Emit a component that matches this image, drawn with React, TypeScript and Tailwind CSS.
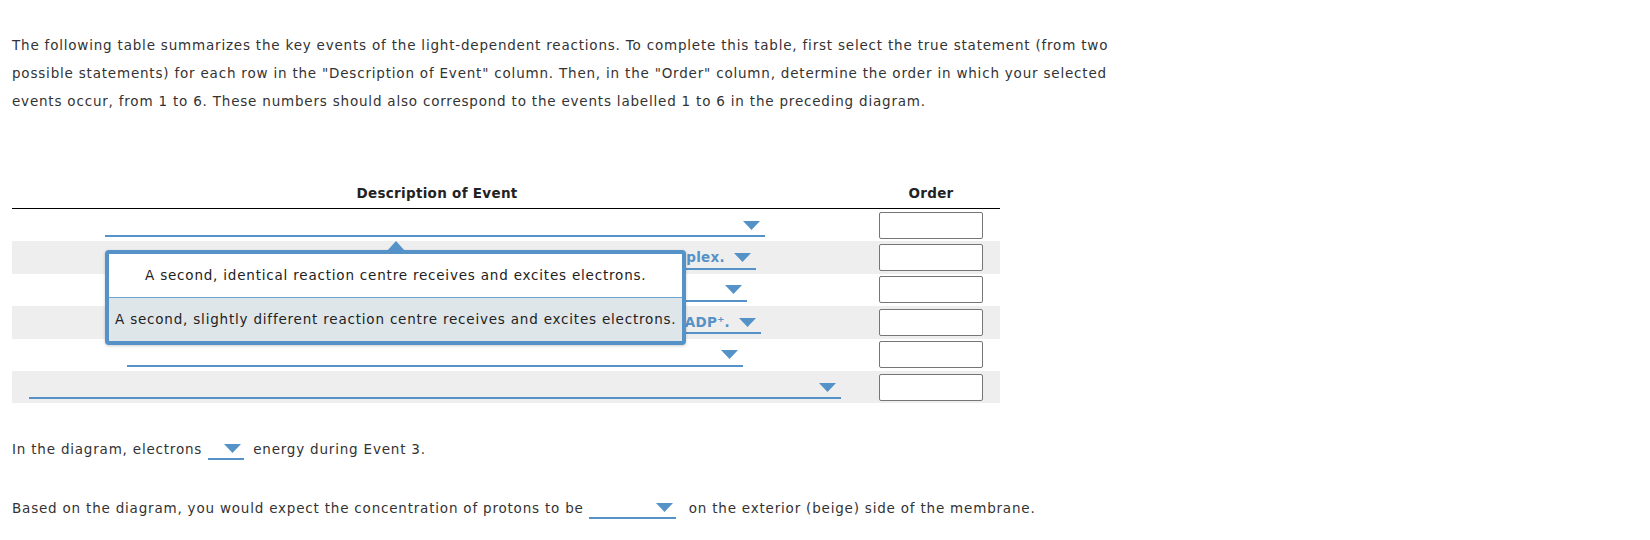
import React from 'react';

const rows: { w: number; text?: string }[] = [
  { w: 660 },
  { w: 642, text: 'Electrons pass to the cytochrome complex.' },
  { w: 624 },
  { w: 652, text: 'Electrons are used to reduce NADP⁺.' },
  { w: 616 },
  { w: 812 },
];

function Arrow() {
  return (
    <svg width="17" height="9" viewBox="0 0 17 9" className="shrink-0">
      <polygon points="0,0 17,0 8.5,9" fill="#5592c7" />
    </svg>
  );
}

function Dropdown({ w, text }: { w: number; text?: string }) {
  return (
    <div
      className="h-[24px] border-b-2 border-[#5592c7] flex items-center justify-end gap-[9px] pr-[5px] pt-[2px] overflow-hidden"
      style={{ width: w }}
    >
      {text && <span className="whitespace-nowrap font-bold text-[#5592c7] tracking-[0.3px]">{text}</span>}
      <Arrow />
    </div>
  );
}

function InlineDropdown({ w }: { w: number }) {
  return (
    <div className="h-[22px] border-b-2 border-[#5592c7] flex items-center justify-end pr-[3px]" style={{ width: w }}>
      <Arrow />
    </div>
  );
}

export default function App() {
  return (
    <div className="w-[1650px] h-[540px] bg-white px-[12px] pt-[31px] text-[13.5px] tracking-[0.8px] text-[#333] font-['DejaVu_Sans',Verdana,sans-serif] overflow-hidden">
      <p className="leading-[28px] whitespace-nowrap">
        The following table summarizes the key events of the light-dependent reactions. To complete this table, first select the true statement (from two
        <br />
        possible statements) for each row in the "Description of Event" column. Then, in the "Order" column, determine the order in which your selected
        <br />
        events occur, from 1 to 6. These numbers should also correspond to the events labelled 1 to 6 in the preceding diagram.
      </p>

      {/* table */}
      <div className="relative mt-[63px] w-[988px]">
        <div className="flex h-[31px] items-center border-b border-black font-bold text-[#222] tracking-[0.3px]">
          <div className="w-[850px] text-center">Description of Event</div>
          <div className="w-[138px] text-center">Order</div>
        </div>
        {rows.map((r, i) => (
          <div key={i} className={`flex h-[32.4px] items-center ${i % 2 === 1 ? 'bg-[#eeeeee]' : 'bg-white'}`}>
            <div className="w-[850px] flex justify-center pr-[4px]">
              <Dropdown w={r.w} text={r.text} />
            </div>
            <div className="w-[138px] flex justify-center">
              <div className="w-[104px] h-[27px] border border-[#767676] rounded-[2px] bg-white" />
            </div>
          </div>
        ))}

        {/* open menu */}
        <div className="absolute left-[93px] top-[72px] w-max whitespace-nowrap">
          <svg width="18" height="10" viewBox="0 0 18 10" className="absolute -top-[9px] left-1/2 -translate-x-1/2">
            <polygon points="0,10 9,0 18,10" fill="#5592c7" />
          </svg>
          <div className="border-4 border-[#5592c7] rounded-[4px] bg-white text-[#222] shadow-[0_1px_3px_rgba(0,0,0,0.2)]">
            <div className="h-[44px] flex items-center justify-center px-[6px] border-b border-[#6fa2cf]">
              A second, identical reaction centre receives and excites electrons.
            </div>
            <div className="h-[43px] flex items-center px-[6px] bg-[#dfe6ea]">
              A second, slightly different reaction centre receives and excites electrons.
            </div>
          </div>
        </div>
      </div>

      <div className="mt-[34px] h-[24px] flex items-center whitespace-nowrap">
        <span>In the diagram, electrons</span>
        <div className="ml-[6px] mr-[9px]">
          <InlineDropdown w={36} />
        </div>
        <span>energy during Event 3.</span>
      </div>

      <div className="mt-[35px] h-[24px] flex items-center whitespace-nowrap">
        <span>Based on the diagram, you would expect the concentration of protons to be</span>
        <div className="ml-[5px] mr-[13px]">
          <InlineDropdown w={87} />
        </div>
        <span>on the exterior (beige) side of the membrane.</span>
      </div>
    </div>
  );
}
